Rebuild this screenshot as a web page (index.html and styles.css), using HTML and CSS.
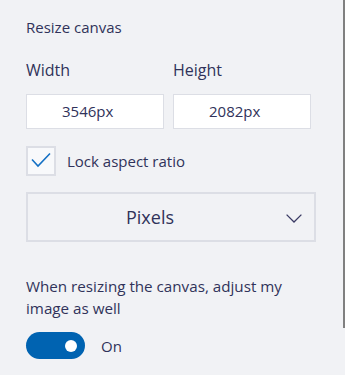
FILE: index.html
```html
<!DOCTYPE html>
<html>
<head>
<meta charset="utf-8">
<link rel="stylesheet" href="styles.css">
</head>
<body>
<div class="panel">
  <div class="title">Resize canvas</div>
  <div class="fields">
    <div class="field">
      <div class="label">Width</div>
      <div class="input">3546px</div>
    </div>
    <div class="field">
      <div class="label">Height</div>
      <div class="input">2082px</div>
    </div>
  </div>
  <div class="check-row">
    <div class="checkbox">
      <svg width="26" height="26" viewBox="0 0 26 26"><path d="M4 11.5 L10 18 L22 5.5" fill="none" stroke="#1470c4" stroke-width="1.6" stroke-linejoin="miter"/></svg>
    </div>
    <div class="check-label">Lock aspect ratio</div>
  </div>
  <div class="select">
    <div class="select-text">Pixels</div>
    <svg class="chevron" width="16" height="9" viewBox="0 0 16 9"><path d="M0.6 0.6 L8 8 L15.4 0.6" fill="none" stroke="#3a3a64" stroke-width="1.3"/></svg>
  </div>
  <div class="desc">When resizing the canvas, adjust my image as well</div>
  <div class="toggle-row">
    <div class="toggle"><div class="knob"></div></div>
    <div class="toggle-label">On</div>
  </div>
  <div class="scrollbar"></div>
</div>
</body>
</html>
```
FILE: styles.css
```css
html, body {
  margin: 0;
  padding: 0;
}
body {
  background: #f1f2f5;
  font-family: "Open Sans", "Noto Sans", sans-serif;
  color: #30325a;
}
.panel {
  position: relative;
  width: 345px;
  height: 375px;
  box-sizing: border-box;
  padding: 17px 0 0 26px;
  overflow: hidden;
}
.title {
  font-size: 15px;
  line-height: 20px;
}
.fields {
  display: flex;
  gap: 9px;
  margin-top: 23px;
}
.label {
  font-size: 16px;
  line-height: 20px;
  margin-bottom: 14px;
}
.input {
  width: 138px;
  height: 35px;
  box-sizing: border-box;
  border: 1px solid #dcdee5;
  background: #fff;
  font-size: 15px;
  line-height: 33px;
  padding-left: 35px;
}
.check-row {
  display: flex;
  align-items: center;
  gap: 11px;
  margin-top: 17px;
}
.checkbox {
  width: 30px;
  height: 30px;
  box-sizing: border-box;
  border: 2px solid #dcdee5;
  background: #f8f9fb;
}
.checkbox svg {
  display: block;
}
.check-label {
  font-size: 15px;
}
.select {
  position: relative;
  margin-top: 16px;
  width: 290px;
  height: 50px;
  box-sizing: border-box;
  border: 2px solid #dcdee5;
  display: flex;
  align-items: center;
}
.select-text {
  flex: 1;
  text-align: center;
  font-size: 18px;
  padding-right: 42px;
}
.chevron {
  position: absolute;
  right: 12px;
  top: 20px;
}
.desc {
  margin-top: 33px;
  width: 290px;
  font-size: 15.2px;
  line-height: 22px;
}
.toggle-row {
  display: flex;
  align-items: center;
  gap: 16px;
  margin-top: 13px;
}
.toggle {
  position: relative;
  width: 59px;
  height: 27px;
  border-radius: 14px;
  background: #0063b1;
}
.knob {
  position: absolute;
  right: 8px;
  top: 7.5px;
  width: 12px;
  height: 12px;
  border-radius: 50%;
  background: #fff;
}
.toggle-label {
  font-size: 15px;
  line-height: 20px;
}
.scrollbar {
  position: absolute;
  right: 0;
  top: 0;
  width: 2px;
  height: 328px;
  background: #808080;
}
```
